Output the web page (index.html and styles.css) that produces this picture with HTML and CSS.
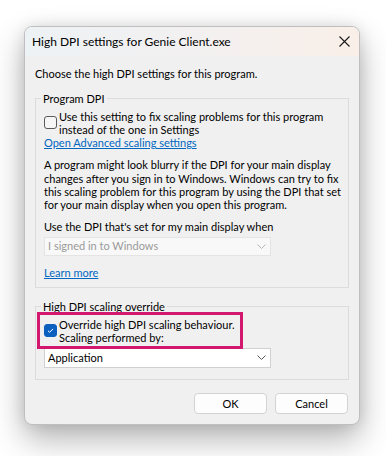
FILE: index.html
```
<!DOCTYPE html>
<html lang="en">
<head>
<meta charset="utf-8">
<title>High DPI settings</title>
<link rel="stylesheet" href="styles.css">
</head>
<body>
<div class="dialog">
  <div class="titlebar">
    <span class="title">High DPI settings for Genie Client.exe</span>
    <svg class="close" width="11" height="11" viewBox="0 0 11 11"><path d="M0.5 0.5 L10.5 10.5 M10.5 0.5 L0.5 10.5" stroke="#1a1a1a" stroke-width="1.1" fill="none"/></svg>
  </div>
  <div class="content">
    <p class="intro">Choose the high DPI settings for this program.</p>
    <fieldset class="group g1">
      <legend>Program DPI</legend>
      <div class="check-row">
        <span class="cb"></span>
        <span class="cb-text">Use this setting to fix scaling problems for this program<br>instead of the one in Settings</span>
      </div>
      <a class="link">Open Advanced scaling settings</a>
      <p class="para">A program might look blurry if the DPI for your main display<br>changes after you sign in to Windows. Windows can try to fix<br>this scaling problem for this program by using the DPI that set<br>for your main display when you open this program.</p>
      <p class="label">Use the DPI that's set for my main display when</p>
      <div class="select disabled">
        <span>I signed in to Windows</span>
        <svg class="chev" width="9" height="5" viewBox="0 0 9 5"><path d="M0.5 0.5 L4.5 4.5 L8.5 0.5" stroke="#b5b5b5" stroke-width="1" fill="none"/></svg>
      </div>
      <a class="link learn">Learn more</a>
    </fieldset>
    <fieldset class="group g2">
      <legend>High DPI scaling override</legend>
      <div class="check-row hl-row">
        <span class="cb checked"><svg width="13" height="13" viewBox="0 0 13 13"><path d="M4 6.8 L5.6 8.3 L9 4.9" stroke="#fff" stroke-width="1" fill="none"/></svg></span>
        <span class="cb-text">Override high DPI scaling behaviour.<br>Scaling performed by:</span>
        <span class="highlight"></span>
      </div>
      <div class="select">
        <span>Application</span>
        <svg class="chev" width="9" height="5" viewBox="0 0 9 5"><path d="M0.5 0.5 L4.5 4.5 L8.5 0.5" stroke="#5a5a5a" stroke-width="1" fill="none"/></svg>
      </div>
    </fieldset>
    <div class="buttons">
      <button class="btn">OK</button>
      <button class="btn">Cancel</button>
    </div>
  </div>
</div>
</body>
</html>
```
FILE: styles.css
```
html, body {
  margin: 0;
  padding: 0;
  background: #ffffff;
}
body {
  font-family: "Lato", "Liberation Sans", sans-serif;
  font-size: 11px;
  line-height: 13.25px;
  color: #000;
  padding: 26px 0 0 24px;
  height: 456px;
  box-sizing: border-box;
  overflow: hidden;
}
.dialog {
  width: 336px;
  box-sizing: border-box;
  border: 1px solid #bfbfbf;
  border-radius: 8px;
  background: #f0f0f0;
  overflow: hidden;
  box-shadow: 0 14px 32px rgba(0,0,0,0.30), 0 0 14px rgba(0,0,0,0.10);
}
.titlebar {
  height: 29px;
  display: flex;
  align-items: center;
  justify-content: space-between;
  padding: 0 9px 0 7px;
  background: linear-gradient(90deg, #edf2f5 0%, #f3f0f0 55%, #f9efe8 100%);
}
.title {
  white-space: nowrap;
  font-size: 12px;
}
.close {
  display: block;
  margin-top: -1px;
}
.content {
  padding: 11px 10px 10px 10px;
}
.intro {
  margin: 0;
  white-space: nowrap;
}
.group {
  margin: 12px 0 0 0;
  padding: 0 7px 8px 8px;
  border: 1px solid #dcdcdc;
  min-width: 0;
}
.group legend {
  padding: 0 2px;
  margin-left: -3px;
  line-height: 13.25px;
  white-space: nowrap;
}
.g2 {
  margin-top: 12px;
  padding-bottom: 11px;
}
.check-row {
  display: flex;
  align-items: center;
  gap: 2px;
  margin-top: 4px;
}
.hl-row {
  position: relative;
  margin-top: 5px;
}
.cb {
  width: 13px;
  height: 13px;
  box-sizing: border-box;
  border: 1px solid #5a5a5a;
  border-radius: 3px;
  background: #f6f6f6;
  flex: none;
  margin-top: -1px;
}
.cb.checked {
  background: #0b5fbf;
  border-color: #0b5fbf;
  position: relative;
}
.cb.checked svg {
  position: absolute;
  left: -1px;
  top: -1px;
}
.cb-text {
  white-space: nowrap;
}
.highlight {
  position: absolute;
  left: -7px;
  top: -6px;
  width: 206px;
  height: 37px;
  box-sizing: border-box;
  border: 3px solid #d2176f;
  pointer-events: none;
}
.link {
  display: block;
  color: #0067c0;
  text-decoration: underline;
  white-space: nowrap;
}
.para {
  margin: 9px 0 0 0;
  white-space: nowrap;
}
.label {
  margin: 9px 0 0 0;
  white-space: nowrap;
}
.select {
  width: 227px;
  height: 20px;
  box-sizing: border-box;
  border: 1px solid #d0d0d0;
  background: #ffffff;
  display: flex;
  align-items: center;
  justify-content: space-between;
  padding: 0 4px 0 3px;
  margin-top: 3px;
}
.select.disabled {
  height: 19px;
  margin-top: 3px;
  background: #f8f8f8;
  border-color: #e4e4e4;
  color: #9a9a9a;
}
.chev {
  display: block;
}
.learn {
  margin-top: 10px;
}
.buttons {
  display: flex;
  justify-content: flex-end;
  gap: 8px;
  margin-top: 13px;
  padding-right: 1px;
}
.btn {
  width: 73px;
  height: 21px;
  box-sizing: border-box;
  border: 1px solid #d3d3d3;
  border-radius: 4px;
  background: #fdfdfd;
  font-family: inherit;
  font-size: 11px;
  color: #000;
  padding: 0;
  line-height: 19px;
}
```
